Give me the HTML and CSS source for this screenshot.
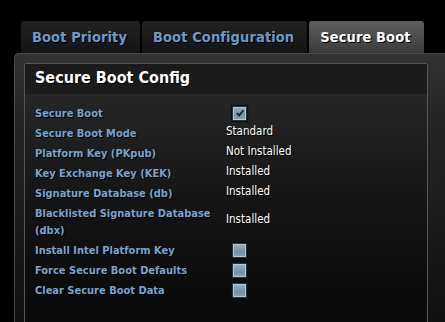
FILE: index.html
```html
<!DOCTYPE html>
<html>
<head>
<meta charset="utf-8">
<link rel="stylesheet" href="styles.css">
</head>
<body>
<div class="tabs">
  <div class="tab">Boot Priority</div>
  <div class="tab">Boot Configuration</div>
  <div class="tab active">Secure Boot</div>
</div>
<div class="outer">
  <div class="panel">
    <div class="panel-head">Secure Boot Config</div>
    <div class="panel-body">
      <div class="row"><div class="label">Secure Boot</div><div class="value"><span class="cb checked"><svg viewBox="0 0 10 10" width="10" height="10"><path d="M2 5.2 L4.2 7.4 L8.4 2.2" fill="none" stroke="#0f2233" stroke-width="1.8"/></svg></span></div></div>
      <div class="row"><div class="label">Secure Boot Mode</div><div class="value text">Standard</div></div>
      <div class="row"><div class="label">Platform Key (PKpub)</div><div class="value text">Not Installed</div></div>
      <div class="row"><div class="label">Key Exchange Key (KEK)</div><div class="value text">Installed</div></div>
      <div class="row"><div class="label">Signature Database (db)</div><div class="value text">Installed</div></div>
      <div class="row"><div class="label">Blacklisted Signature Database (dbx)</div><div class="value text">Installed</div></div>
      <div class="row"><div class="label">Install Intel Platform Key</div><div class="value"><span class="cb"></span></div></div>
      <div class="row"><div class="label">Force Secure Boot Defaults</div><div class="value"><span class="cb"></span></div></div>
      <div class="row"><div class="label">Clear Secure Boot Data</div><div class="value"><span class="cb"></span></div></div>
    </div>
  </div>
</div>
</body>
</html>
```
FILE: styles.css
```css
html, body {
  margin: 0;
  padding: 0;
  background: #000;
  height: 100%;
  overflow: hidden;
}
body {
  font-family: "DejaVu Sans Condensed", "DejaVu Sans", sans-serif;
  font-stretch: condensed;
}
.tabs {
  display: flex;
  gap: 2px;
  padding: 21px 0 0 21px;
}
.tab {
  height: 32px;
  box-sizing: border-box;
  padding: 0 13px 1px 11px;
  display: flex;
  align-items: center;
  background: linear-gradient(#222, #141414);
  border-radius: 3px 3px 0 0;
  color: #6b9acb;
  font-weight: bold;
  font-size: 14.5px;
  letter-spacing: 0.1px;
  text-shadow: 1px 1px 0 #000;
}
.tab.active {
  background: linear-gradient(#5e5e5e, #3a3a3a);
  color: #fff;
}
.outer {
  margin-left: 14px;
  margin-right: -20px;
  height: 280px;
  border-radius: 5px 0 0 0;
  border-left: 1px solid #4a4a4a;
  border-top: 1px solid #4a4a4a;
  background: linear-gradient(#333 0px, #262626 60px, #111 260px);
  padding: 9px 0 0 9px;
  box-sizing: border-box;
}
.panel {
  width: 404px;
  box-sizing: border-box;
  border: 1px solid #4b5a68;
  border-radius: 2px;
  height: 270px;
  background: linear-gradient(#262626 30px, #161616 130px, #0b0b0b 230px);
}
.panel-head {
  height: 30px;
  box-sizing: border-box;
  background: #1b1b1b;
  color: #fff;
  font-weight: bold;
  font-size: 16px;
  padding: 4px 0 0 10px;
  text-shadow: 1px 1px 0 #000;
}
.panel-body {
  padding: 9px 0 0 10px;
}
.row {
  display: flex;
  align-items: center;
  padding: 1.5px 0;
}
.label {
  width: 185px;
  margin-right: 6px;
  color: #7ca3cf;
  font-weight: bold;
  font-size: 11px;
  line-height: 17px;
  text-shadow: 1px 1px 0 #000;
}
.value {
  color: #fff;
  font-size: 11.5px;
  line-height: 17px;
  text-shadow: 1px 1px 0 #000;
  display: flex;
  align-items: center;
}
.value.text {
  line-height: 13px;
  padding-bottom: 4px;
}
.cb {
  margin-left: 6px;
  width: 15px;
  height: 15px;
  box-sizing: border-box;
  border: 1px solid #22323c;
  background: linear-gradient(#9bb2be, #7790a0 60%, #8aa3b0);
  box-shadow: inset 0 0 0 1px #b6c9d2, 0 0 1px 1px #0a1014;
  display: flex;
  align-items: center;
  justify-content: center;
}
.cb svg { display: block; }
```
